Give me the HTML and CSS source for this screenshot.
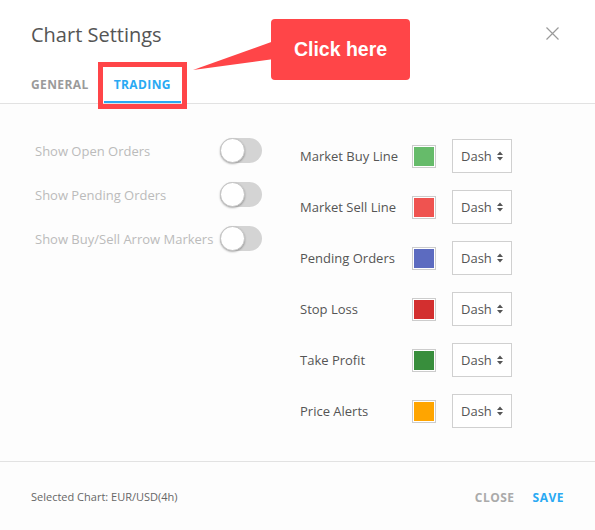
FILE: index.html
```html
<!DOCTYPE html>
<html>
<head>
<meta charset="utf-8">
<link rel="stylesheet" href="styles.css">
</head>
<body>
<div class="dialog">
  <div class="header">
    <div class="title-row">
      <div class="title">Chart Settings</div>
      <svg class="close-x" width="13" height="13" viewBox="0 0 13 13"><path d="M0.5 0.5 L12.5 12.5 M12.5 0.5 L0.5 12.5" stroke="#9a9a9a" stroke-width="1.2" fill="none"/></svg>
    </div>
    <div class="tabs">
      <div class="tab">GENERAL</div>
      <div class="tab active">TRADING</div>
    </div>
  </div>
  <div class="body">
    <div class="left-col">
      <div class="toggle-row"><span class="toggle-label">Show Open Orders</span><span class="toggle"><span class="knob"></span></span></div>
      <div class="toggle-row"><span class="toggle-label">Show Pending Orders</span><span class="toggle"><span class="knob"></span></span></div>
      <div class="toggle-row"><span class="toggle-label">Show Buy/Sell Arrow Markers</span><span class="toggle"><span class="knob"></span></span></div>
    </div>
    <div class="right-col">
      <div class="line-row"><span class="line-label">Market Buy Line</span><span class="swatch"><span class="fill c-green"></span></span><span class="select"><span>Dash</span><svg class="arrows" width="6" height="10" viewBox="0 0 6 10"><path d="M0 4 L3 0.5 L6 4 Z M0 6 L3 9.5 L6 6 Z" fill="#555"/></svg></span></div>
      <div class="line-row"><span class="line-label">Market Sell Line</span><span class="swatch"><span class="fill c-red"></span></span><span class="select"><span>Dash</span><svg class="arrows" width="6" height="10" viewBox="0 0 6 10"><path d="M0 4 L3 0.5 L6 4 Z M0 6 L3 9.5 L6 6 Z" fill="#555"/></svg></span></div>
      <div class="line-row"><span class="line-label">Pending Orders</span><span class="swatch"><span class="fill c-blue"></span></span><span class="select"><span>Dash</span><svg class="arrows" width="6" height="10" viewBox="0 0 6 10"><path d="M0 4 L3 0.5 L6 4 Z M0 6 L3 9.5 L6 6 Z" fill="#555"/></svg></span></div>
      <div class="line-row"><span class="line-label">Stop Loss</span><span class="swatch"><span class="fill c-darkred"></span></span><span class="select"><span>Dash</span><svg class="arrows" width="6" height="10" viewBox="0 0 6 10"><path d="M0 4 L3 0.5 L6 4 Z M0 6 L3 9.5 L6 6 Z" fill="#555"/></svg></span></div>
      <div class="line-row"><span class="line-label">Take Profit</span><span class="swatch"><span class="fill c-darkgreen"></span></span><span class="select"><span>Dash</span><svg class="arrows" width="6" height="10" viewBox="0 0 6 10"><path d="M0 4 L3 0.5 L6 4 Z M0 6 L3 9.5 L6 6 Z" fill="#555"/></svg></span></div>
      <div class="line-row"><span class="line-label">Price Alerts</span><span class="swatch"><span class="fill c-orange"></span></span><span class="select"><span>Dash</span><svg class="arrows" width="6" height="10" viewBox="0 0 6 10"><path d="M0 4 L3 0.5 L6 4 Z M0 6 L3 9.5 L6 6 Z" fill="#555"/></svg></span></div>
    </div>
  </div>
  <div class="footer">
    <span class="selected">Selected Chart: EUR/USD(4h)</span>
    <div class="actions">
      <span class="btn btn-close">CLOSE</span>
      <span class="btn btn-save">SAVE</span>
    </div>
  </div>

  <div class="highlight"></div>
  <svg class="pointer" width="86" height="42" viewBox="0 0 86 42"><polygon points="84,6 3,35 84,24" fill="#ff4548"/></svg>
  <div class="callout">Click here</div>
</div>
</body>
</html>
```
FILE: styles.css
```css
* { box-sizing: border-box; }
html, body { margin: 0; padding: 0; background: #fff; }
.dialog {
  position: relative;
  width: 595px;
  height: 530px;
  display: flex;
  flex-direction: column;
  font-family: "Open Sans", "Liberation Sans", sans-serif;
  background: #fff;
  overflow: hidden;
}
.header {
  padding: 22px 31px 0 31px;
  border-bottom: 1px solid #e2e2e2;
}
.title-row {
  display: flex;
  justify-content: space-between;
  align-items: flex-start;
  height: 26px;
}
.title {
  font-size: 20px;
  line-height: 26px;
  color: #555;
}
.close-x {
  margin-top: 5px;
  margin-right: 5px;
}
.tabs {
  display: flex;
  gap: 5px;
  margin: 29px 0 0 -10px;
}
.tab {
  padding: 0 10px 8px;
  font-size: 12px;
  font-weight: 700;
  line-height: 16px;
  letter-spacing: 0.4px;
  color: #9a9a9a;
  border-bottom: 2px solid transparent;
}
.tab.active {
  color: #29a9f3;
  border-bottom-color: #29a9f3;
}
.body {
  flex: 1;
  display: flex;
  padding: 34px 0 0 35px;
  background: #fdfdfd;
}
.left-col {
  width: 227px;
  display: flex;
  flex-direction: column;
  gap: 19px;
}
.toggle-row {
  display: flex;
  align-items: center;
  height: 25px;
}
.toggle-label {
  font-size: 13px;
  color: #bbb;
  white-space: nowrap;
}
.toggle {
  position: relative;
  margin-left: auto;
  width: 42px;
  height: 25px;
  border-radius: 13px;
  background: #d4d4d4;
  flex: none;
}
.knob {
  position: absolute;
  left: 0;
  top: 0;
  width: 25px;
  height: 25px;
  border-radius: 50%;
  background: #fff;
  border: 1px solid #c4c4c4;
  box-shadow: 0 1px 2px rgba(0,0,0,0.3);
}
.right-col {
  margin-left: 38px;
  padding-top: 1px;
  display: flex;
  flex-direction: column;
  gap: 17px;
}
.line-row {
  display: flex;
  align-items: center;
  height: 34px;
}
.line-label {
  width: 112px;
  font-size: 13px;
  color: #555;
  white-space: nowrap;
}
.swatch {
  width: 24px;
  height: 23px;
  border: 1px solid #ccc;
  padding: 1px;
  background: #fff;
  display: flex;
}
.fill { flex: 1; }
.c-green { background: #66bb6a; }
.c-red { background: #ef5350; }
.c-blue { background: #5c6bc0; }
.c-darkred { background: #d32f2f; }
.c-darkgreen { background: #388e3c; }
.c-orange { background: #ffa500; }
.select {
  margin-left: 16px;
  width: 60px;
  height: 34px;
  border: 1px solid #d0d0d0;
  background: #fff;
  display: flex;
  align-items: center;
  padding-left: 8px;
  gap: 5px;
  font-size: 13px;
  color: #555;
}
.arrows { flex: none; }
.footer {
  height: 69px;
  border-top: 1px solid #e2e2e2;
  padding: 0 31px;
  display: flex;
  align-items: center;
  justify-content: space-between;
  background: #fdfdfd;
}
.selected {
  font-size: 11px;
  color: #666;
}
.actions {
  display: flex;
  gap: 18px;
  margin-top: 3px;
}
.btn {
  font-size: 12px;
  font-weight: 700;
  letter-spacing: 0.5px;
}
.btn-close { color: #aaa; }
.btn-save { color: #29a9f3; }
.highlight {
  position: absolute;
  left: 98px;
  top: 62px;
  width: 89px;
  height: 47px;
  border: 5px solid #ff4548;
}
.pointer {
  position: absolute;
  left: 190px;
  top: 35px;
}
.callout {
  position: absolute;
  left: 271px;
  top: 19px;
  width: 139px;
  height: 61px;
  border-radius: 4px;
  background: #ff4548;
  color: #fff;
  font-family: "Liberation Sans", Arial, sans-serif;
  font-weight: 700;
  font-size: 19.5px;
  display: flex;
  align-items: center;
  justify-content: center;
}
```
